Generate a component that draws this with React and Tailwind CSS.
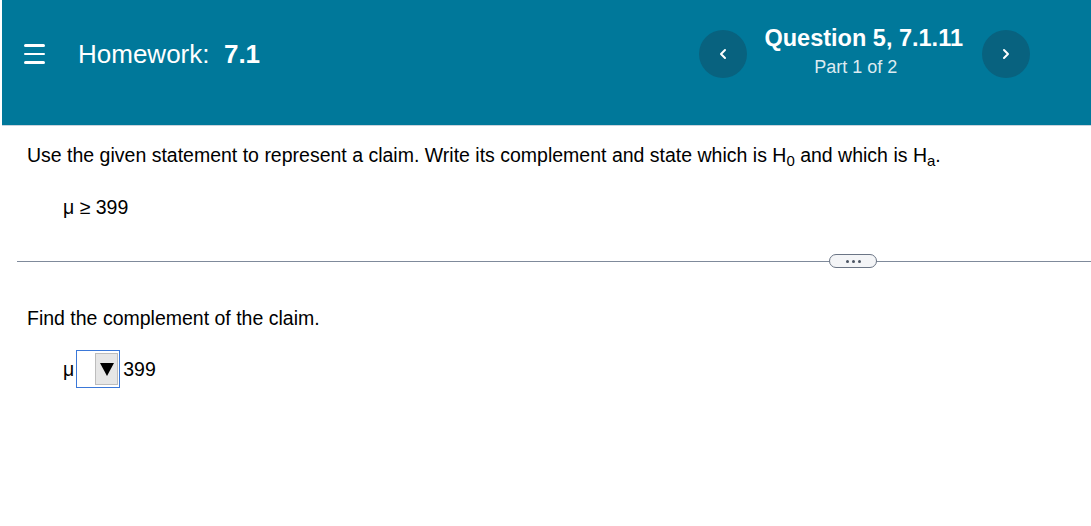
import { ChevronLeft, ChevronRight } from "lucide-react"

function NavButton({ children }) {
  return (
    <button
      type="button"
      className="grid h-[48px] w-[48px] place-items-center rounded-full bg-[#08627f] text-white"
    >
      {children}
    </button>
  )
}

export default function App() {
  return (
    <main className="min-h-screen bg-white font-['Liberation_Sans',Arial,sans-serif] text-black">
      <header className="ml-[2px] h-[126px] border-b border-[#c9d3dd] bg-[#00789a] text-white">
        <div className="flex h-[108px] items-center justify-between pr-[61px]">
          <div className="flex items-center">
            <span className="ml-[22px] flex w-[21px] flex-col gap-[6px]">
              <span className="h-[2.5px] rounded-full bg-white" />
              <span className="h-[2.5px] rounded-full bg-white" />
              <span className="h-[2.5px] rounded-full bg-white" />
            </span>
            <h1 className="ml-[33px] text-[26px] leading-none">
              Homework:&nbsp; <span className="font-bold">7.1</span>
            </h1>
          </div>
          <div className="flex items-center">
            <NavButton>
              <ChevronLeft size={16} strokeWidth={3} />
            </NavButton>
            <div className="-mt-[5px] ml-[17px] mr-[19px] flex flex-col items-center">
              <p className="text-[23.5px] font-bold leading-none">Question 5, 7.1.11</p>
              <p className="mt-[7px] pr-[16px] text-[18px] leading-none text-[#dcebf1]">Part 1 of 2</p>
            </div>
            <NavButton>
              <ChevronRight size={16} strokeWidth={3} />
            </NavButton>
          </div>
        </div>
      </header>

      <section className="pl-[27px] pt-[18px] text-[19.5px] leading-[22px]">
        <p>
          Use the given statement to represent a claim. Write its complement and state which is H
          <sub className="text-[15px]">0</sub> and which is H<sub className="text-[15px]">a</sub>.
        </p>
        <p className="mt-[30px] pl-[36px]">μ ≥ 399</p>
      </section>

      <div className="relative ml-[17px] mt-[43px] h-px bg-[#7f8a9b]">
        <button
          type="button"
          className="absolute left-[812px] top-[-7px] flex h-[14px] w-[48px] items-center justify-center gap-[3px] rounded-full border border-[#6b7585] bg-[#f4f5f7]"
        >
          <span className="h-[3px] w-[3px] rounded-full bg-[#4b5563]" />
          <span className="h-[3px] w-[3px] rounded-full bg-[#4b5563]" />
          <span className="h-[3px] w-[3px] rounded-full bg-[#4b5563]" />
        </button>
      </div>

      <section className="pl-[27px] pt-[45px] text-[19.5px] leading-[22px]">
        <p>Find the complement of the claim.</p>
        <div className="mt-[21px] flex items-center pl-[36px]">
          <span>μ</span>
          <span className="ml-[2px] flex h-[38px] w-[44px] items-center justify-end border border-[#3b78d8] bg-white pr-[1px]">
            <span className="grid h-[32px] w-[23px] place-items-center border border-[#bdbdbd] bg-[#e6e6e6]">
              <svg width="14" height="14" viewBox="0 0 14 14">
                <polygon points="0,1 14,1 7,14" fill="#000" />
              </svg>
            </span>
          </span>
          <span className="ml-[3px]">399</span>
        </div>
      </section>
    </main>
  )
}
